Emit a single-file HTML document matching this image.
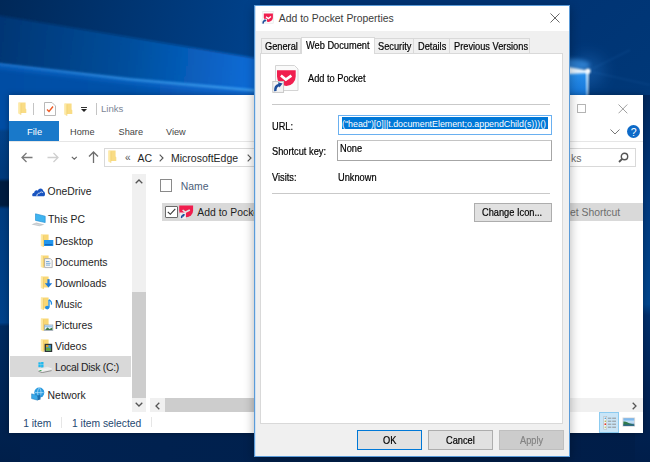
<!DOCTYPE html>
<html><head><meta charset="utf-8">
<style>
*{margin:0;padding:0;box-sizing:border-box}
html,body{width:650px;height:462px;overflow:hidden;background:#001e4a;font-family:"Liberation Sans",sans-serif}
.a{position:absolute}
.t{position:absolute;white-space:nowrap;line-height:1}
#wall{position:absolute;left:0;top:0;width:650px;height:462px}
#exp{position:absolute;left:9px;top:95px;width:634px;height:338px;background:#fff;box-shadow:0 0 6px rgba(0,0,0,.35)}
.ex{color:#1e1e1e;font-size:10.3px}
#dlg{position:absolute;left:254px;top:5px;width:316px;height:452px;background:#f0f0f0;border:1px solid #5b9bd8;box-shadow:0 3px 10px rgba(0,0,0,.3)}
.nav{font-size:10.4px;color:#1e1e1e}
.dt{color:#000;font-size:10.4px;transform:scaleX(0.89);transform-origin:0 0;-webkit-text-stroke:0.2px currentColor}
</style></head><body>
<svg id="wall" width="650" height="462" viewBox="0 0 650 462">
  <defs>
    <linearGradient id="gTop" x1="0" y1="0" x2="255" y2="55" gradientUnits="userSpaceOnUse">
      <stop offset="0" stop-color="#002858"/><stop offset="1" stop-color="#00428c"/>
    </linearGradient>
    <linearGradient id="gBand" x1="0" y1="40" x2="255" y2="70" gradientUnits="userSpaceOnUse">
      <stop offset="0" stop-color="#003674"/><stop offset="0.5" stop-color="#024e9c"/><stop offset="1" stop-color="#0c6cd8"/>
    </linearGradient>
    <linearGradient id="gUnder" x1="0" y1="80" x2="255" y2="95" gradientUnits="userSpaceOnUse">
      <stop offset="0" stop-color="#044ea4"/><stop offset="0.5" stop-color="#0552aa"/><stop offset="1" stop-color="#0c68d4"/>
    </linearGradient>
    <linearGradient id="gLeft" x1="0" y1="95" x2="0" y2="462" gradientUnits="userSpaceOnUse">
      <stop offset="0" stop-color="#044896"/><stop offset="0.2" stop-color="#003a7c"/><stop offset="0.62" stop-color="#00418a"/><stop offset="0.63" stop-color="#002a60"/><stop offset="1" stop-color="#001f4a"/>
    </linearGradient>
    <linearGradient id="gRight" x1="569" y1="0" x2="650" y2="95" gradientUnits="userSpaceOnUse">
      <stop offset="0" stop-color="#003474"/><stop offset="1" stop-color="#003878"/>
    </linearGradient>
    <filter id="b1" x="-20%" y="-50%" width="140%" height="200%"><feGaussianBlur stdDeviation="0.8"/></filter>
    <filter id="b2" x="-20%" y="-50%" width="140%" height="200%"><feGaussianBlur stdDeviation="2"/></filter>
    <filter id="b8" x="-100%" y="-100%" width="300%" height="300%"><feGaussianBlur stdDeviation="8"/></filter>
  </defs>
  <rect width="650" height="462" fill="#001f4a"/>
  <defs><linearGradient id="gBot" x1="0" y1="0" x2="650" y2="0" gradientUnits="userSpaceOnUse"><stop offset="0" stop-color="#002252"/><stop offset="0.5" stop-color="#00204c"/><stop offset="1" stop-color="#001d48"/></linearGradient></defs>
  <rect x="0" y="420" width="650" height="42" fill="url(#gBot)"/>
  <rect x="0" y="90" width="20" height="372" fill="url(#gLeft)"/>
  <rect x="-10" y="180" width="30" height="27" fill="#001a40" filter="url(#b1)"/>
  <polygon points="-30,0 280,0 280,62.5 -30,11" fill="url(#gTop)"/>
  <polygon points="-30,10.5 280,62 280,94 130,79 -30,59" fill="url(#gBand)" filter="url(#b1)"/>
  <polygon points="-30,61 130,79.5 280,93 280,130 -30,130" fill="url(#gUnder)" filter="url(#b1)"/>
  <defs><linearGradient id="gLine" x1="0" y1="0" x2="260" y2="0" gradientUnits="userSpaceOnUse"><stop offset="0" stop-color="#1c78d8"/><stop offset="0.5" stop-color="#3096f0"/><stop offset="1" stop-color="#44a6f8"/></linearGradient></defs>
  <polygon points="-30,61 130,79.5 280,93 280,97 130,84 -30,65" fill="#1272d8" opacity="0.5" filter="url(#b2)"/>
  <polygon points="-30,59.6 130,78.2 280,91.6 280,93.8 130,80.4 -30,61.8" fill="url(#gLine)" filter="url(#b1)"/>
  <rect x="260" y="0" width="390" height="95" fill="url(#gRight)"/>
  <defs><linearGradient id="gRS" x1="0" y1="95" x2="0" y2="462" gradientUnits="userSpaceOnUse"><stop offset="0" stop-color="#00285e"/><stop offset="0.3" stop-color="#003a80"/><stop offset="0.57" stop-color="#00468e"/><stop offset="0.6" stop-color="#002f6c"/><stop offset="0.8" stop-color="#002356"/><stop offset="1" stop-color="#001e4a"/></linearGradient></defs>
  <rect x="635" y="95" width="15" height="367" fill="url(#gRS)"/>
  <circle cx="588" cy="71" r="16" fill="#2a7fd6" opacity="0.35" filter="url(#b8)"/>
  <defs><linearGradient id="gPane" x1="0" y1="71" x2="0" y2="95" gradientUnits="userSpaceOnUse"><stop offset="0" stop-color="#2a92ee"/><stop offset="1" stop-color="#1474d6"/></linearGradient></defs>
  <ellipse cx="572" cy="65" rx="18" ry="6" fill="#4aa8ff" opacity="0.55" filter="url(#b2)"/>
  <rect x="560" y="71" width="27.5" height="30" fill="url(#gPane)"/>
  <polygon points="560,65.5 588,70.5 588,73 560,74.5" fill="#e6f4ff" filter="url(#b1)"/>
  <polygon points="586,71 588.8,71 588.2,96 586.8,96" fill="#d6eeff" filter="url(#b1)"/>
  <path d="M588 71L630 50M588 71L650 85" stroke="#4a9ae8" stroke-width="1.2" opacity="0.15" filter="url(#b1)"/>
  <circle cx="588" cy="71" r="2.5" fill="#ffffff" filter="url(#b1)"/>
</svg>

<!-- Explorer -->
<div id="exp">
  <!-- title bar -->
  <svg class="a" style="left:9px;top:7px" width="9" height="13" viewBox="0 0 9 13"><path d="M0.6 0.5H7.6V6.5L8.3 7.2V11H0.6Z" fill="#f9dc85"/><path d="M0.4 0.6L2.9 1.6V12.8L0.4 11.8Z" fill="#fde9a6"/><path d="M2.9 1.6V12.8" stroke="#ecc963" stroke-width="0.6"/></svg>
  <div class="a" style="left:24px;top:8px;width:1px;height:12px;background:#c4c4c4"></div>
  <svg class="a" style="left:35px;top:7px" width="12" height="14" viewBox="0 0 12 14"><path d="M0.5 0.5 H8 L11.5 4 V13.5 H0.5Z" fill="#fff" stroke="#b9b9b9"/><path d="M3 7.5 L5 9.5 L9 4.5" fill="none" stroke="#ee5a24" stroke-width="1.4"/></svg>
  <svg class="a" style="left:55px;top:8px" width="9" height="13" viewBox="0 0 9 13"><path d="M0.6 0.5H7.6V6.5L8.3 7.2V11H0.6Z" fill="#f9dc85"/><path d="M0.4 0.6L2.9 1.6V12.8L0.4 11.8Z" fill="#fde9a6"/><path d="M2.9 1.6V12.8" stroke="#ecc963" stroke-width="0.6"/></svg>
  <div class="a" style="left:72px;top:12px;width:6px;height:1px;background:#333"></div>
  <svg class="a" style="left:72px;top:14px" width="6" height="4" viewBox="0 0 6 4"><path d="M0 0H6L3 3Z" fill="#222"/></svg>
  <div class="a" style="left:87px;top:8px;width:1px;height:12px;background:#c4c4c4"></div>
  <div class="t" style="left:92px;top:9px;font-size:9.6px;color:#7d8797">Links</div>
  <div class="a" style="left:567.5px;top:8.7px;width:9.3px;height:9.3px;border:1px solid #b4b4b4;border-radius:0.5px"></div>
  <svg class="a" style="left:609px;top:8.5px" width="10" height="10" viewBox="0 0 10 10"><path d="M0.5 0.5L9.3 9.3M9.3 0.5L0.5 9.3" stroke="#a0a0a0" stroke-width="1"/></svg>
  <!-- ribbon -->
  <div class="a" style="left:0;top:26px;width:50px;height:20px;background:#1979ca"></div>
  <div class="t" style="left:18px;top:32px;font-size:9.4px;color:#fff">File</div>
  <div class="t" style="left:61px;top:32.7px;font-size:9.2px;color:#444">Home</div>
  <div class="t" style="left:109.5px;top:32.7px;font-size:9.2px;color:#444">Share</div>
  <div class="t" style="left:157px;top:32.7px;font-size:9.2px;color:#444">View</div>
  <svg class="a" style="left:601px;top:33.8px" width="10" height="6" viewBox="0 0 10 6"><path d="M0.5 0.5L5 5L9.5 0.5" fill="none" stroke="#777" stroke-width="1"/></svg>
  <div class="a" style="left:618px;top:30px;width:13px;height:13px;border-radius:50%;background:#0d6ac8"></div>
  <div class="t" style="left:621.8px;top:31.8px;font-size:10.5px;color:#fff">?</div>
  <div class="a" style="left:0;top:46px;width:634px;height:1px;background:#e6e6e6"></div>
  <!-- address row -->
  <svg class="a" style="left:12px;top:57px" width="12" height="11" viewBox="0 0 12 11"><path d="M11.5 5.5H1M5.5 1L1 5.5L5.5 10" fill="none" stroke="#7a7a7a" stroke-width="1.3"/></svg>
  <svg class="a" style="left:38px;top:57px" width="12" height="11" viewBox="0 0 12 11"><path d="M0.5 5.5H11M6.5 1L11 5.5L6.5 10" fill="none" stroke="#cfcfcf" stroke-width="1.3"/></svg>
  <svg class="a" style="left:61.5px;top:61px" width="7" height="5" viewBox="0 0 7 5"><path d="M0.8 0.8L3.3 3.2L5.8 0.8" fill="none" stroke="#666" stroke-width="1.1"/></svg>
  <svg class="a" style="left:79px;top:56px" width="11" height="12" viewBox="0 0 11 12"><path d="M5.5 12V1.2M1 5.5L5.5 1L10 5.5" fill="none" stroke="#6e6e6e" stroke-width="1.3"/></svg>
  <div class="a" style="left:94.5px;top:53px;width:300px;height:18.5px;border:1px solid #d9d9d9"></div>
  <svg class="a" style="left:99px;top:55px" width="9" height="13" viewBox="0 0 9 13"><path d="M0.6 0.5H7.6V6.5L8.3 7.2V11H0.6Z" fill="#f9dc85"/><path d="M0.4 0.6L2.9 1.6V12.8L0.4 11.8Z" fill="#fde9a6"/><path d="M2.9 1.6V12.8" stroke="#ecc963" stroke-width="0.6"/></svg>
  <div class="t" style="left:116px;top:57.6px;font-size:10px;color:#555">&#171;</div>
  <div class="t" style="left:128.4px;top:57.5px;font-size:10.5px;color:#1e1e1e">AC</div>
  <svg class="a" style="left:150px;top:59px" width="5" height="8" viewBox="0 0 5 8"><path d="M0.7 0.7L4 4L0.7 7.3" fill="none" stroke="#555" stroke-width="1.1"/></svg>
  <div class="t" style="left:162px;top:57.5px;font-size:10.5px;color:#1e1e1e">MicrosoftEdge</div>
  <svg class="a" style="left:237.5px;top:59px" width="5" height="8" viewBox="0 0 5 8"><path d="M0.7 0.7L4 4L0.7 7.3" fill="none" stroke="#555" stroke-width="1.1"/></svg>
  <div class="a" style="left:500px;top:53px;width:127px;height:18.5px;border:1px solid #d9d9d9"></div>
  <div class="t" style="left:562px;top:58px;font-size:10.5px;color:#6d6d6d">ks</div>
  <svg class="a" style="left:609px;top:57px" width="11" height="11" viewBox="0 0 11 11"><circle cx="6.5" cy="4.5" r="3.2" fill="none" stroke="#555" stroke-width="1.4"/><path d="M4.2 6.8L1 10" stroke="#555" stroke-width="1.8"/></svg>
  <!-- nav pane scrollbar -->
  <div class="a" style="left:123px;top:78.5px;width:14px;height:238.5px;background:#f0f0f0"></div>
  <div class="a" style="left:123px;top:197px;width:14px;height:106px;background:#cdcdcd"></div>
  <svg class="a" style="left:126px;top:84px" width="8" height="5" viewBox="0 0 8 5"><path d="M0.7 4.3L4 1L7.3 4.3" fill="none" stroke="#555" stroke-width="1.3"/></svg>
  <svg class="a" style="left:126px;top:307px" width="8" height="5" viewBox="0 0 8 5"><path d="M0.7 0.7L4 4L7.3 0.7" fill="none" stroke="#555" stroke-width="1.3"/></svg>
  <!-- horizontal scrollbar -->
  <div class="a" style="left:141px;top:303px;width:493px;height:14px;background:#f0f0f0"></div>
  <div class="a" style="left:156px;top:303px;width:400px;height:14px;background:#cdcdcd"></div>
  <svg class="a" style="left:146px;top:306.5px" width="5" height="8" viewBox="0 0 5 8"><path d="M4.3 0.7L1 4L4.3 7.3" fill="none" stroke="#555" stroke-width="1.3"/></svg>
  <svg class="a" style="left:623px;top:306.5px" width="5" height="8" viewBox="0 0 5 8"><path d="M0.7 0.7L4 4L0.7 7.3" fill="none" stroke="#555" stroke-width="1.3"/></svg>
  <!-- nav items -->
  <div class="a" style="left:1px;top:261px;width:121px;height:21px;background:#d9d9d9"></div>
  <svg class="a" style="left:23px;top:91.5px" width="14" height="10" viewBox="0 0 14 10"><path d="M1.2 9.3C-0.3 9.3 -0.2 5.8 2.2 5.8C2.3 3.6 4.4 2.8 5.8 3.8C6.8 0.9 10.8 0.6 11.4 4.2C13.4 4.4 13.8 9.3 11.2 9.3Z" fill="#1a55c0"/><path d="M4.8 9.3C4.8 7 6.2 6 7.6 6.2C8.4 4.6 10.3 4.6 11 6" fill="none" stroke="#fff" stroke-width="0.8"/></svg>
  <div class="t nav" style="left:38.6px;top:91.5px">OneDrive</div>
  <svg class="a" style="left:21.5px;top:117.5px" width="16" height="14" viewBox="0 0 16 14"><path d="M4.5 0.8L14.2 3.2V9.6L4.5 7.4Z" fill="#3fb4f0" stroke="#1d8ad0" stroke-width="0.6"/><path d="M0.5 11.5L8.5 13.3L13.5 11.6L5.2 9.6Z" fill="#c3c8cc"/><path d="M3.5 10.8L9.5 12.2" stroke="#e8ebed" stroke-width="0.5"/></svg>
  <div class="t nav" style="left:39px;top:120.1px">This PC</div>
  <svg class="a" style="left:30.5px;top:138.8px" width="14" height="14" viewBox="0 0 14 14"><path d="M1 0.5H8.6V11.5H1Z" fill="#f8d775"/><path d="M0.8 0.6L3.4 1.6V13L0.8 12Z" fill="#fde8a2"/><path d="M3.4 1.6V13" stroke="#e9c258" stroke-width="0.6"/><rect x="4" y="6" width="9.3" height="6" fill="#2196ee"/><rect x="4.8" y="10.2" width="7.6" height="1.1" fill="#0d5fb5"/></svg>
  <div class="t nav" style="left:46px;top:142.1px">Desktop</div>
  <svg class="a" style="left:30.5px;top:159.8px" width="14" height="14" viewBox="0 0 14 14"><path d="M1 0.5H8.6V11.5H1Z" fill="#f8d775"/><path d="M0.8 0.6L3.4 1.6V13L0.8 12Z" fill="#fde8a2"/><path d="M3.4 1.6V13" stroke="#e9c258" stroke-width="0.6"/><path d="M4.6 3.6H10.4L12.2 5.4V12.6H4.6Z" fill="#f6f6f6" stroke="#9a9a9a" stroke-width="0.7"/><path d="M6 6.5H9.5M6 8.3H10.5M6 10.1H10" stroke="#5c9ad0" stroke-width="0.8"/></svg>
  <div class="t nav" style="left:46px;top:163.1px">Documents</div>
  <svg class="a" style="left:30.5px;top:180.7px" width="14" height="14" viewBox="0 0 14 14"><path d="M1 0.5H8.6V11.5H1Z" fill="#f8d775"/><path d="M0.8 0.6L3.4 1.6V13L0.8 12Z" fill="#fde8a2"/><path d="M3.4 1.6V13" stroke="#e9c258" stroke-width="0.6"/><path d="M8.5 3.2V8.5" stroke="#1d7ad8" stroke-width="2.2"/><path d="M4.8 7.2L8.5 11.6L12.2 7.2Z" fill="#1d7ad8"/></svg>
  <div class="t nav" style="left:46px;top:184.0px">Downloads</div>
  <svg class="a" style="left:30.5px;top:201.6px" width="14" height="14" viewBox="0 0 14 14"><path d="M1 0.5H8.6V11.5H1Z" fill="#f8d775"/><path d="M0.8 0.6L3.4 1.6V13L0.8 12Z" fill="#fde8a2"/><path d="M3.4 1.6V13" stroke="#e9c258" stroke-width="0.6"/><path d="M9 2.8V10.2" stroke="#1f8ee6" stroke-width="1.3"/><ellipse cx="7.2" cy="10.6" rx="2.2" ry="1.8" fill="#1f8ee6"/><path d="M9 2.8Q12 4.2 11.4 7.6" fill="none" stroke="#1f8ee6" stroke-width="1.3"/></svg>
  <div class="t nav" style="left:46px;top:204.9px">Music</div>
  <svg class="a" style="left:30.5px;top:222.6px" width="14" height="14" viewBox="0 0 14 14"><path d="M1 0.5H8.6V11.5H1Z" fill="#f8d775"/><path d="M0.8 0.6L3.4 1.6V13L0.8 12Z" fill="#fde8a2"/><path d="M3.4 1.6V13" stroke="#e9c258" stroke-width="0.6"/><rect x="4.5" y="7" width="8.3" height="5.4" fill="#e9f2f8" stroke="#9aa6b0" stroke-width="0.8"/><path d="M5 12L7.5 9.3L9.5 11L12.3 9.6V12Z" fill="#3e7a4a"/><rect x="5" y="7.5" width="7.3" height="1.8" fill="#9cc9ee"/></svg>
  <div class="t nav" style="left:46px;top:225.9px">Pictures</div>
  <svg class="a" style="left:30.5px;top:243.7px" width="14" height="14" viewBox="0 0 14 14"><path d="M1 0.5H8.6V11.5H1Z" fill="#f8d775"/><path d="M0.8 0.6L3.4 1.6V13L0.8 12Z" fill="#fde8a2"/><path d="M3.4 1.6V13" stroke="#e9c258" stroke-width="0.6"/><rect x="4.6" y="4.8" width="7.6" height="8.2" fill="#2d3436"/><rect x="6" y="6" width="4.8" height="5.8" fill="#3a9ad8"/><path d="M6 9.5L8 8.3L10.8 10V11.8H6Z" fill="#6aa838"/><path d="M6 6H8.4V8.2H6Z" fill="#e0a020"/></svg>
  <div class="t nav" style="left:46px;top:247.0px">Videos</div>
  <svg class="a" style="left:28.5px;top:266.5px" width="14" height="11" viewBox="0 0 14 11"><rect x="0.4" y="0.3" width="2.4" height="2.3" fill="#1fb8ee"/><rect x="3.1" y="0" width="2.4" height="2.6" fill="#1fb8ee"/><rect x="0.4" y="2.9" width="2.4" height="2.3" fill="#1fb8ee"/><rect x="3.1" y="2.9" width="2.4" height="2.6" fill="#1fb8ee"/><path d="M0.3 6.8L9.5 4.8L13.6 6.3V8.6L4.2 10.6L0.3 9.2Z" fill="#ececec"/><path d="M0.3 6.8L4.2 8.2L13.6 6.3" fill="none" stroke="#fafafa" stroke-width="0.6"/><path d="M0.3 9.2L4.2 10.6L13.6 8.6" fill="none" stroke="#7c7c7c" stroke-width="0.8"/><rect x="1.5" y="8" width="2" height="0.9" fill="#2fa84f"/></svg>
  <div class="t nav" style="left:46px;top:268px;letter-spacing:-0.28px">Local Disk (C:)</div>
  <svg class="a" style="left:21.5px;top:292px" width="14" height="14" viewBox="0 0 14 14"><circle cx="8.3" cy="5.6" r="5" fill="#2a9be0"/><path d="M4 5.6H12.6M8.3 0.8C6 3 6 8 8.3 10.4M8.3 0.8C10.6 3 10.6 8 8.3 10.4" fill="none" stroke="#b7e2fa" stroke-width="0.7"/><path d="M0.6 6.8L6.6 8.4V13.2L0.6 11.6Z" fill="#39a8e8" stroke="#1877b8" stroke-width="0.5"/><path d="M6.6 8.4L9.5 7.6V12.4L6.6 13.2Z" fill="#1b6fb0"/></svg>
  <div class="t nav" style="left:38.6px;top:296.3px">Network</div>
  <!-- list header -->
  <div class="a" style="left:150.6px;top:84.4px;width:12.5px;height:12.5px;border:1px solid #8a8a8a;background:#fff"></div>
  <div class="t" style="left:171.8px;top:87px;font-size:10.4px;color:#4c607a">Name</div>
  <!-- selected file row -->
  <div class="a" style="left:152.6px;top:107.8px;width:481px;height:18.5px;background:#d9d9d9"></div>
  <div class="a" style="left:156px;top:110.5px;width:12.6px;height:12.6px;border:1px solid #6a6a6a;border-radius:1px;background:#fff"></div>
  <svg class="a" style="left:158px;top:113px" width="9" height="8" viewBox="0 0 9 8"><path d="M0.8 3.8L3.3 6.3L8.3 0.8" fill="none" stroke="#333" stroke-width="1.1"/></svg>
  <svg class="a" style="left:170px;top:109px" width="16" height="16" viewBox="0 0 16 16"><path d="M0.2 1.6H14.1V6.4A6.95 6.95 0 0 1 0.2 6.4Z" fill="#f01e4e"/><path d="M3.6 6L6.3 8.2L10.8 6" fill="none" stroke="#e4e4e4" stroke-width="1.6"/><rect x="0.8" y="8.5" width="6.1" height="6.4" fill="#eef0f2"/><path d="M2.6 14.2C2.4 12.6 3 11.6 4.4 11.3" fill="none" stroke="#1f4f9c" stroke-width="1.5"/><path d="M3.6 9.8L6.2 10.6L4.3 12.9Z" fill="#1f4f9c"/></svg>
  <div class="t" style="left:188.3px;top:113.3px;font-size:10.4px;color:#1e1e1e">Add to Pocket Shortcut</div>
  <div class="t" style="left:534.4px;top:113.3px;font-size:10.4px;color:#6d6d6d">Internet Shortcut</div>
  <!-- status bar -->
  <div class="t" style="left:14.2px;top:324.2px;font-size:10.3px;color:#1e4870">1 item</div>
  <div class="a" style="left:51.5px;top:322px;width:1px;height:11px;background:#e6e6e6"></div>
  <div class="t" style="left:63px;top:324.2px;font-size:10.3px;color:#1e4870">1 item selected</div>
  <div class="a" style="left:141.5px;top:322px;width:1px;height:10px;background:#e6e6e6"></div>
  <div class="a" style="left:590.4px;top:317px;width:19.3px;height:20.7px;background:#c9e5f7;border:1.3px solid #8ccbf0"></div>
  <svg class="a" style="left:594px;top:321px" width="14" height="14" viewBox="0 0 14 14"><rect x="0.8" y="0.6" width="3" height="12.6" fill="#eef3f6" stroke="#b4b4b4" stroke-width="0.5"/><circle cx="2.3" cy="2.2" r="0.8" fill="#3a9ad8"/><circle cx="2.3" cy="5.2" r="0.8" fill="#a8b848"/><circle cx="2.3" cy="8.2" r="0.9" fill="#e23a2a"/><circle cx="2.3" cy="11.2" r="0.8" fill="#b0c870"/><path d="M4.9 2.2H8.3M9.2 2.2H13M4.9 5.2H8.3M9.2 5.2H13M4.9 8.2H8.3M9.2 8.2H13M4.9 11.2H8.3M9.2 11.2H13" stroke="#8a8a8a" stroke-width="0.9"/></svg>
  <svg class="a" style="left:613px;top:322px" width="14" height="11" viewBox="0 0 14 11"><rect x="0.5" y="0.5" width="12.6" height="9.2" fill="#d8d8d8"/><defs><linearGradient id="gPic" x1="0" y1="0" x2="0" y2="1"><stop offset="0" stop-color="#5aa6ec"/><stop offset="0.5" stop-color="#cfe6f5"/><stop offset="1" stop-color="#3a78c0"/></linearGradient></defs><rect x="1.4" y="1.4" width="10.8" height="7.4" fill="url(#gPic)"/><path d="M1.4 4.5C4 4.2 6 5.5 8 6.6L12.2 7.4V8.8H1.4Z" fill="#2f7a4a"/><path d="M1.4 7.5H12.2V8.8H1.4Z" fill="#2a5aa0" opacity="0.7"/></svg></div>

<!-- Dialog -->
<div id="dlg">
  <div class="a" style="left:0;top:0;width:314px;height:25px;background:#fff"></div>
  <svg class="a" style="left:5px;top:4px" width="16" height="16" viewBox="0 0 16 16"><rect x="2.8" y="1.5" width="10.4" height="11.7" fill="#fcfcfc" stroke="#e2e2e2" stroke-width="0.6"/><path d="M3.8 3.6H12.9V7.5A4.55 4.4 0 0 1 3.8 7.5Z" fill="#f01e4e"/><path d="M6 6.7L8.4 8.6L11 6.4" fill="none" stroke="#fff" stroke-width="1.3"/><rect x="1.2" y="8.8" width="5.8" height="5.2" fill="#f2f4f6"/><path d="M3.2 13.6C3 11.9 3.6 10.8 5 10.6" fill="none" stroke="#1f4f9c" stroke-width="1.5"/><path d="M4.3 9.2L6.7 10.1L4.9 12Z" fill="#1f4f9c"/></svg>
  <div class="t" style="left:23.8px;top:8.3px;font-size:10.4px;color:#3c3c3c">Add to Pocket Properties</div>
  <svg class="a" style="left:295px;top:7px" width="10" height="10" viewBox="0 0 10 10"><path d="M0.5 0.5L9.5 9.5M9.5 0.5L0.5 9.5" stroke="#606060" stroke-width="0.95"/></svg>
  <!-- tabs -->
  <div class="a" style="left:6px;top:32.3px;width:40px;height:15.2px;background:#f0f0f0;border:1px solid #d9d9d9;border-bottom:none"></div>
  <div class="a" style="left:118.5px;top:32.3px;width:40.5px;height:15.2px;background:#f0f0f0;border:1px solid #d9d9d9;border-bottom:none"></div>
  <div class="a" style="left:158px;top:32.3px;width:37px;height:15.2px;background:#f0f0f0;border:1px solid #d9d9d9;border-bottom:none"></div>
  <div class="a" style="left:194px;top:32.3px;width:81px;height:15.2px;background:#f0f0f0;border:1px solid #d9d9d9;border-bottom:none"></div>
  <div class="a" style="left:5px;top:46.5px;width:303px;height:371px;background:#fff;border:1px solid #d9d9d9"></div>
  <div class="a" style="left:45.5px;top:30.6px;width:74px;height:17px;background:#fff;border:1px solid #d9d9d9;border-bottom:none"></div>
  <div class="a" style="left:0;top:0;width:1px;height:450px;background:#cfe2f4"></div>
  <div class="t dt" style="left:9.8px;top:35.5px">General</div>
  <div class="t dt" style="left:50.8px;top:35.1px">Web Document</div>
  <div class="t dt" style="left:122.7px;top:35.9px">Security</div>
  <div class="t dt" style="left:162.7px;top:35.9px">Details</div>
  <div class="t dt" style="left:198.7px;top:35.9px">Previous Versions</div>
  <!-- big icon -->
  <svg class="a" style="left:15px;top:57px" width="30" height="32" viewBox="0 0 30 32"><path d="M5.5 2.5H24.5L28 6V27.5H5.5Z" fill="#fafafa" stroke="#d4d4d4"/><path d="M7 7.2H25.7V13.5A9.35 9.5 0 0 1 7 13.5Z" fill="#f01e4e"/><path d="M10.9 12.6L15.8 16.6L21.4 12.6" fill="none" stroke="#fff" stroke-width="2.6"/><rect x="2.8" y="18.5" width="10.8" height="10.9" fill="#f4f4f4" stroke="#c4c4c4" stroke-width="0.9"/><path d="M5.3 28.2C5 24.5 6.4 22.6 9.4 22.1" fill="none" stroke="#1f4f9c" stroke-width="2.5"/><path d="M8 19.3L12.6 20.6L9.4 24.6Z" fill="#1f4f9c"/></svg>
  <div class="t dt" style="left:52.6px;top:68.0px">Add to Pocket</div>
  <div class="a" style="left:17px;top:98px;width:278px;height:1px;background:#c9c9c9"></div>
  <div class="t dt" style="left:17.4px;top:116.3px">URL:</div>
  <div class="a" style="left:82.5px;top:109.2px;width:214.5px;height:20.3px;border:1px solid #6ab0f0"></div>
  <div class="a" style="left:86.8px;top:111.4px;width:206.7px;height:12px;background:#0078d7"></div>
  <div class="t" style="left:87px;top:114.3px;font-size:8.85px;color:#fff">("head")[0]||t.documentElement;o.appendChild(s)))()</div>
  <div class="t dt" style="left:17.4px;top:140.6px">Shortcut key:</div>
  <div class="a" style="left:82px;top:134.3px;width:215px;height:20.7px;border:1px solid #a6a6a6;border-top-color:#c4c4c4;background:#fff"></div>
  <div class="t dt" style="left:84.8px;top:137.8px">None</div>
  <div class="t dt" style="left:17.4px;top:167.1px">Visits:</div>
  <div class="t dt" style="left:82.7px;top:167.1px">Unknown</div>
  <div class="a" style="left:17px;top:187px;width:278px;height:1px;background:#c9c9c9"></div>
  <div class="a" style="left:218.8px;top:196.8px;width:78px;height:19.2px;background:#e1e1e1;border:1px solid #adadad"></div>
  <div class="t dt" style="left:227.3px;top:202.4px">Change Icon...</div>
  <!-- buttons -->
  <div class="a" style="left:102px;top:424.2px;width:65px;height:19.5px;background:#e1e1e1;border:1px solid #0078d7"></div>
  <div class="t dt" style="left:127.5px;top:429.5px">OK</div>
  <div class="a" style="left:172.8px;top:424.2px;width:65px;height:19.5px;background:#e1e1e1;border:1px solid #adadad"></div>
  <div class="t dt" style="left:191px;top:429.5px">Cancel</div>
  <div class="a" style="left:244px;top:424.2px;width:65px;height:19.5px;background:#cccccc;border:1px solid #bfbfbf"></div>
  <div class="t dt" style="left:264.8px;top:429.5px;color:#838383">Apply</div>
</div>
</body></html>
